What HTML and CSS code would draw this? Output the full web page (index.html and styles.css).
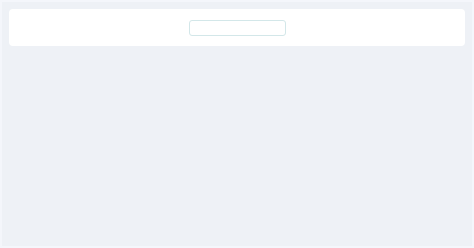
FILE: index.html
```html
<!DOCTYPE html>
<html>
<head>
<meta charset="utf-8">
<link rel="stylesheet" href="styles.css">
</head>
<body>
<div class="app">
  <div class="card">
    <input class="search" type="text" aria-label="Search">
  </div>
</div>
</body>
</html>
```

FILE: styles.css
```css
html, body {
  margin: 0;
  padding: 0;
  height: 100%;
}
body {
  background: #f4f6fb;
  font-family: "Liberation Sans", Arial, sans-serif;
}
.app {
  box-sizing: border-box;
  margin: 2px 2px 0 2px;
  height: 244px;
  background: #eef1f6;
  padding: 7px;
}
.card {
  background: #ffffff;
  border-radius: 4px;
  height: 37px;
  display: flex;
  align-items: center;
  justify-content: center;
}
.search {
  box-sizing: border-box;
  width: 97px;
  height: 16px;
  border: 1.5px solid #d3e7e9;
  border-radius: 3px;
  background: #fff;
  padding: 0;
  margin: 0;
  outline: none;
}
```
